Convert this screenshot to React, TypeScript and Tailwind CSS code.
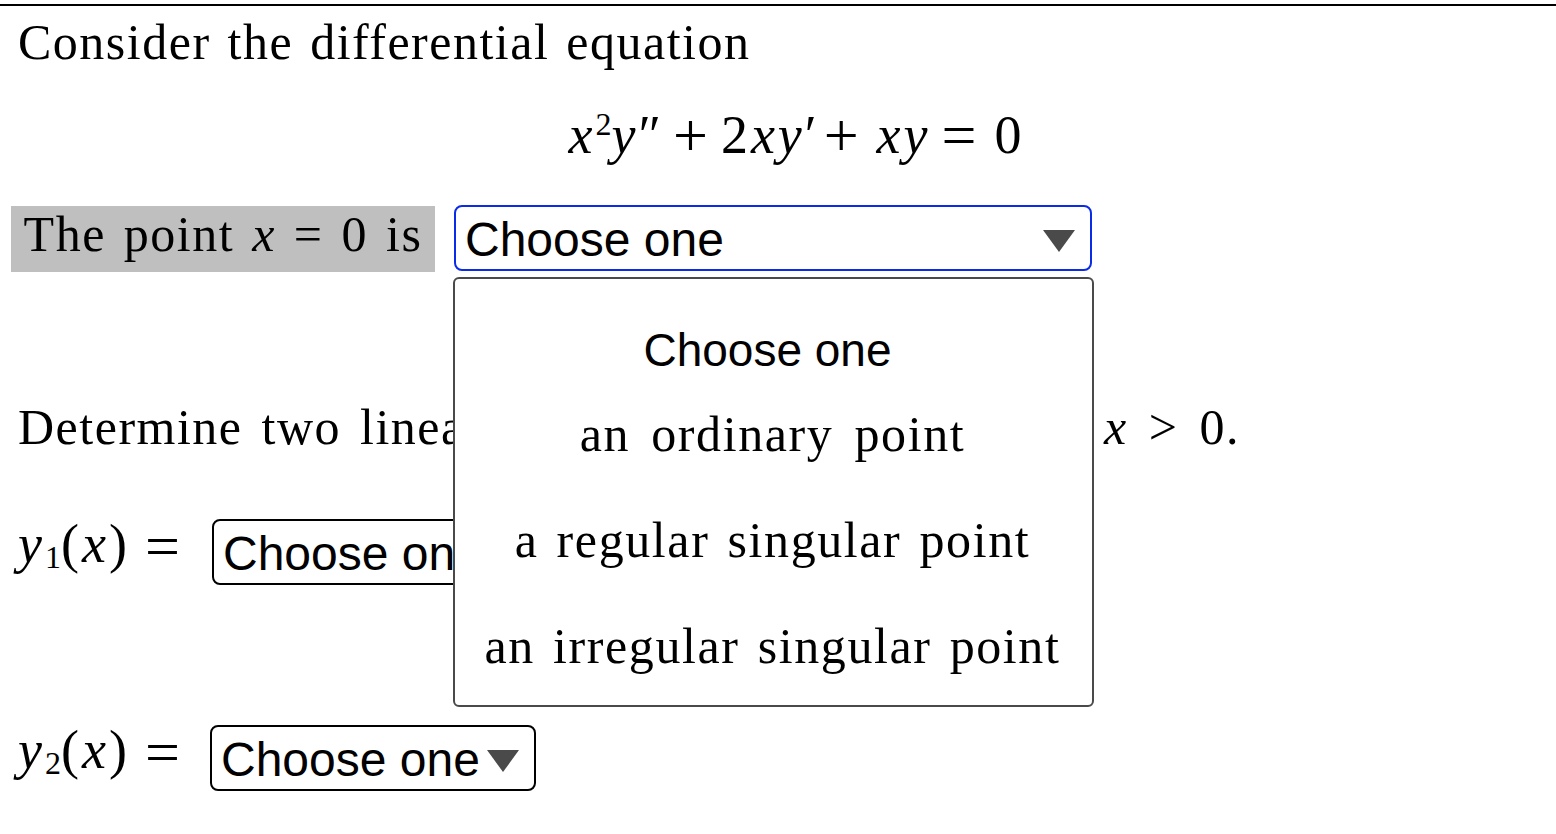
const serif = "font-['Liberation_Serif',serif]";

function X({ children }: { children: string }) {
  return <i className="italic">{children}</i>;
}

// math operators are drawn a bit wider than the body font
function Op({ children, className }: { children: string; className: string }) {
  return <span className={`text-[62px] leading-none tracking-normal ${className}`}>{children}</span>;
}

function Caret() {
  return (
    <svg width="34" height="24" viewBox="0 0 34 24" className="mt-[6px] shrink-0">
      <path d="M1 1 H33 L17 23 Z" fill="#4a4a4a" />
    </svg>
  );
}

function Select({ className, focused }: { className: string; focused?: boolean }) {
  return (
    <div
      className={`flex h-[66px] shrink-0 items-center justify-between rounded-lg border-2 bg-white pl-[9px] pr-[14px] font-['Liberation_Sans',sans-serif] text-[48px] leading-none text-black ${
        focused ? "border-[#0a2be8]" : "border-black"
      } ${className}`}
    >
      <span className="pt-[4px] whitespace-nowrap">Choose one</span>
      <Caret />
    </div>
  );
}

function Solution({ n, className }: { n: string; className: string }) {
  return (
    <div className={`flex h-[66px] items-center pb-[12px] ${className}`}>
      <span className="text-[54px] leading-none tracking-[3px] whitespace-nowrap">
        <X>y</X>
        <sub className="bottom-[-6px] text-[32px] tracking-normal">{n}</sub>(<X>x</X>)
        <Op className="ml-[15px] align-[-5px]">=</Op>
      </span>
    </div>
  );
}

export default function App() {
  return (
    <div className={`relative h-[834px] w-[1556px] overflow-hidden bg-white pt-[4px] text-black ${serif}`}>
      <div className="h-[2px] bg-black" />

      <div className="mt-[9px] h-[54px] pl-[18px] text-[50px] leading-[54px] tracking-[1.5px] [word-spacing:3px] whitespace-nowrap">
        Consider the differential equation
      </div>

      <div className="mt-[34px] flex h-[64px] justify-center pl-[37px] text-[54px] leading-[64px] tracking-[3px] whitespace-nowrap">
        <span>
          <X>x</X>
          <sup className="top-[-18px] text-[32px] tracking-normal">2</sup>
          <X>y</X>
          <span className="mr-[9px]">″</span>
          <Op className="align-[-3px]">+</Op>
          <span className="ml-[13px]">2</span>
          <X>xy</X>
          <span className="mr-[4px]">′</span>
          <Op className="align-[-3px]">+</Op>
          <span className="ml-[18px]">
            <X>xy</X>
          </span>
          <Op className="mr-[18px] ml-[11px] align-[-3px]">=</Op>0
        </span>
      </div>

      <div className="mt-[38px] flex items-start pl-[11px]">
        <div className="mt-[1px] flex h-[66px] w-[424px] items-center justify-center bg-[#bfbfbf] pb-[10px] text-[50px] leading-none tracking-[1.5px] [word-spacing:4px] whitespace-nowrap">
          The point&nbsp;<X>x</X>&nbsp;=&nbsp;0&nbsp;is
        </div>
        <Select focused className="ml-[19px] w-[638px]" />
      </div>

      <div className="mt-[128px] flex h-[54px] pl-[18px] text-[50px] leading-[54px] tracking-[1.5px] [word-spacing:5px] whitespace-nowrap">
        {/* the rest of this sentence sits under the open list */}
        <span className="mr-[651px] w-[435px]">Determine two linearly</span>
        <span className="[word-spacing:7px]">
          <X>x</X>&nbsp;&gt;&nbsp;0.
        </span>
      </div>

      <div className="mt-[65px] flex items-center pl-[18px]">
        <Solution n="1" className="w-[194px]" />
        <Select className="w-[326px]" />
      </div>

      <div className="mt-[140px] flex items-center pl-[18px]">
        <Solution n="2" className="w-[192px]" />
        <Select className="w-[326px]" />
      </div>

      {/* open dropdown list */}
      <div className="absolute top-[277px] left-[453px] flex h-[430px] w-[641px] flex-col items-center rounded-md border-2 border-[#4a4a4a] bg-white text-[50px] leading-none tracking-[1.6px] [word-spacing:4px] whitespace-nowrap">
        <div className="mt-[48px] mr-[12px] font-['Liberation_Sans',sans-serif] text-[46px] tracking-normal [word-spacing:0px]">
          Choose one
        </div>
        <div className="mt-[36px] mr-[2px] [word-spacing:7px]">an ordinary point</div>
        <div className="mt-[56px] mr-[2px]">a regular singular point</div>
        <div className="mt-[56px] mr-[2px]">an irregular singular point</div>
      </div>
    </div>
  );
}
